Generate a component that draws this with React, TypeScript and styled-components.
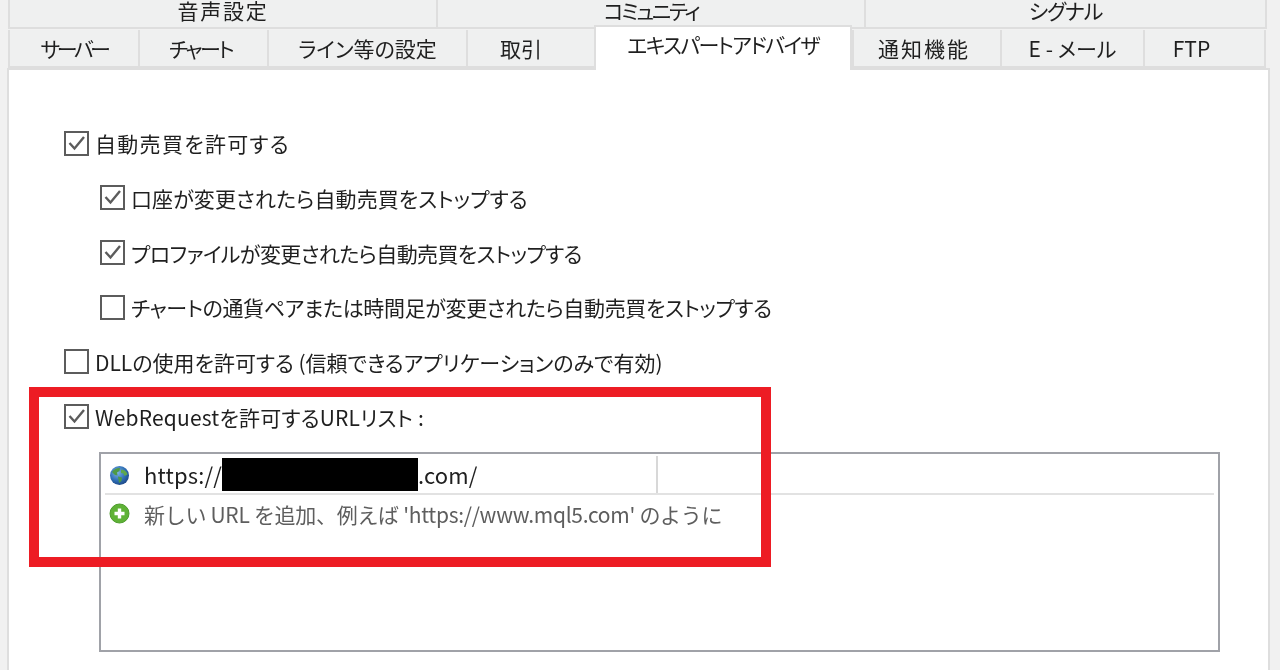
import React from "react"
import styled, { createGlobalStyle } from "styled-components"

const GlobalStyle = createGlobalStyle`
  html, body {
    margin: 0;
    padding: 0;
    background: #f1f1f1;
  }
`

const fontStack = `"Noto Sans CJK JP", "Noto Sans", sans-serif`

const Page = styled.div`
  position: relative;
  display: flex;
  flex-direction: column;
  width: 1280px;
  height: 670px;
  overflow: hidden;
  background: #f1f1f1;
  color: #1f1f1f;
  font-family: ${fontStack};
  font-size: 21px;
  font-feature-settings: "palt";
  filter: blur(0.4px);
`

const TabRow = styled.div<{ $height: number }>`
  display: flex;
  flex: none;
  height: ${props => props.$height}px;
  margin-left: 8px;
  margin-right: 12px;
`

const BackTab = styled.div<{ $width: number; $nudge?: number; $tracking?: number }>`
  display: flex;
  align-items: center;
  justify-content: center;
  box-sizing: border-box;
  flex: none;
  width: ${props => props.$width}px;
  padding-right: ${props => props.$nudge || 0}px;
  padding-bottom: 1px;
  letter-spacing: ${props => props.$tracking || 0}px;
  background: #eff0f0;
  border-left: 2px solid #dedede;
  border-bottom: 2px solid #dedede;
  white-space: nowrap;

  &:last-child {
    border-right: 2px solid #dedede;
  }
`

const UpperTab = styled(BackTab)`
  padding-bottom: 6px;
  margin-bottom: 1px;
  line-height: 1;
`

const ActiveTab = styled.div`
  position: relative;
  z-index: 1;
  display: flex;
  align-items: center;
  justify-content: center;
  box-sizing: border-box;
  flex: none;
  width: 258px;
  height: 45px;
  margin-top: -5px;
  padding-bottom: 10px;
  letter-spacing: -1.6px;
  background: #fff;
  border: 2px solid #dedede;
  border-bottom: none;
  white-space: nowrap;
`

const Panel = styled.div`
  display: flex;
  flex: 1;
  flex-direction: column;
  box-sizing: border-box;
  width: 1263px;
  margin-left: 7px;
  padding: 46px 0 0 0;
  background: #fff;
  border: 2px solid #dedede;
  border-bottom: none;
`

const OptionRow = styled.label<{ $indent: number; $tracking: number }>`
  display: flex;
  align-items: center;
  gap: 6px;
  height: 54.67px;
  padding-left: ${props => props.$indent}px;
  letter-spacing: ${props => props.$tracking}px;
  white-space: nowrap;
`

const Box = styled.span`
  display: flex;
  align-items: center;
  justify-content: center;
  box-sizing: border-box;
  flex: none;
  width: 25px;
  height: 25px;
  background: #fff;
  border: 2px solid #5c5c5c;
`

const UrlList = styled.div`
  box-sizing: border-box;
  width: 1121px;
  height: 200px;
  margin: 8px 0 0 90px;
  padding: 0 2px;
  background: #fff;
  border: 2px solid #a0a2a8;
`

const UrlRow = styled.div`
  display: flex;
  align-items: stretch;
  height: 39px;
  margin: 0 2px;
  border-bottom: 2px solid #e2e2e2;
`

const UrlCell = styled.div`
  display: flex;
  align-items: center;
  box-sizing: border-box;
  width: 553px;
  margin: 2px 0 0;
  padding-left: 4px;
  font-size: 22px;
  letter-spacing: 0.15px;
  border-right: 2px solid #d8d8d8;
`

const HintRow = styled.div`
  display: flex;
  align-items: center;
  height: 38px;
  padding-left: 6px;
  color: #5e5e5e;
  font-feature-settings: normal;
  letter-spacing: -0.3px;
  white-space: nowrap;
`

const RowIcon = styled.svg<{ $drop?: number }>`
  flex: none;
  width: 21px;
  height: 21px;
  margin-top: ${props => props.$drop || 0}px;
  margin-right: 14px;
`

const Redaction = styled.span`
  flex: none;
  width: 196px;
  height: 33px;
  background: #000;
`

const Highlight = styled.div`
  position: absolute;
  z-index: 2;
  top: 387px;
  left: 29px;
  box-sizing: border-box;
  width: 742px;
  height: 180px;
  border: 10px solid #ed1c24;
  pointer-events: none;
`

const Check = ({ checked }: { checked: boolean }) => (
  <Box>
    {checked && (
      <svg width="21" height="21" viewBox="0 0 21 21">
        <path d="M3.5 10 L8.5 15.5 L18 4" fill="none" stroke="#5c5c5c" strokeWidth="2.4" />
      </svg>
    )}
  </Box>
)

const GlobeIcon = () => (
  <RowIcon viewBox="0 0 21 21" $drop={3}>
    <defs>
      <radialGradient id="sea" cx="40%" cy="35%" r="70%">
        <stop offset="0" stopColor="#7fb4e6" />
        <stop offset="0.6" stopColor="#2f6fb5" />
        <stop offset="1" stopColor="#1c4583" />
      </radialGradient>
    </defs>
    <circle cx="10.5" cy="10.5" r="9.5" fill="url(#sea)" />
    <path d="M3 7 C5 3.5 9 2.5 11 3 L10.5 6 L8 7.5 L8.5 10.5 L6 10 Z" fill="#4f9a45" />
    <path d="M12 5 C15 4 18 6.5 18.5 9.5 L15.5 11 L14.5 8.5 L12 8 Z" fill="#5ea84d" />
    <path d="M9 11.5 L13 12.5 L12.5 16 L10 18 Z" fill="#4f9a45" />
  </RowIcon>
)

const PlusIcon = () => (
  <RowIcon viewBox="0 0 21 21">
    <circle cx="10.5" cy="10.5" r="9.5" fill="#5fb236" stroke="#4c9c2a" strokeWidth="1" />
    <path d="M10.5 5.5 V15.5 M5.5 10.5 H15.5" fill="none" stroke="#fff" strokeWidth="3.4" />
  </RowIcon>
)

const upperTabs = [
  { label: "音声設定", width: 428, tracking: 1.7 },
  { label: "コミュニティ", width: 428, tracking: -2.3 },
  { label: "シグナル", width: 403, tracking: -1.2 },
]

const leftTabs = [
  { label: "サーバー", width: 130, tracking: -3.5 },
  { label: "チャート", width: 129, nudge: 6, tracking: -2.5 },
  { label: "ライン等の設定", width: 199 },
  { label: "取引", width: 128, nudge: 20 },
]

const rightTabs = [
  { label: "通知機能", width: 148, nudge: 6, tracking: 2 },
  { label: "E - メール", width: 143 },
  { label: "FTP", width: 123, nudge: 26 },
]

const options = [
  { text: "自動売買を許可する", indent: 55, checked: true, tracking: 1.3 },
  { text: "口座が変更されたら自動売買をストップする", indent: 91, checked: true, tracking: 0.1 },
  { text: "プロファイルが変更されたら自動売買をストップする", indent: 91, checked: true, tracking: -0.6 },
  { text: "チャートの通貨ペアまたは時間足が変更されたら自動売買をストップする", indent: 91, checked: false, tracking: -0.35 },
  { text: "DLLの使用を許可する (信頼できるアプリケーションのみで有効)", indent: 55, checked: false, tracking: 0 },
  { text: "WebRequestを許可するURLリスト :", indent: 55, checked: true, tracking: 0.2 },
]

const App = () => (
  <Page>
    <GlobalStyle />
    <TabRow $height={30}>
      {upperTabs.map(tab => (
        <UpperTab key={tab.label} $width={tab.width} $tracking={tab.tracking}>
          {tab.label}
        </UpperTab>
      ))}
    </TabRow>
    <TabRow $height={38}>
      {leftTabs.map(tab => (
        <BackTab key={tab.label} $width={tab.width} $nudge={tab.nudge} $tracking={tab.tracking}>
          {tab.label}
        </BackTab>
      ))}
      <ActiveTab>エキスパートアドバイザ</ActiveTab>
      {rightTabs.map(tab => (
        <BackTab key={tab.label} $width={tab.width} $nudge={tab.nudge} $tracking={tab.tracking}>
          {tab.label}
        </BackTab>
      ))}
    </TabRow>
    <Panel>
      {options.map(option => (
        <OptionRow key={option.text} $indent={option.indent} $tracking={option.tracking}>
          <Check checked={option.checked} />
          {option.text}
        </OptionRow>
      ))}
      <UrlList>
        <UrlRow>
          <UrlCell>
            <GlobeIcon />
            https://
            <Redaction />
            .com/
          </UrlCell>
        </UrlRow>
        <HintRow>
          <PlusIcon />
          新しい URL を追加、例えば 'https://www.mql5.com' のように
        </HintRow>
      </UrlList>
    </Panel>
    <Highlight />
  </Page>
)

export default App
